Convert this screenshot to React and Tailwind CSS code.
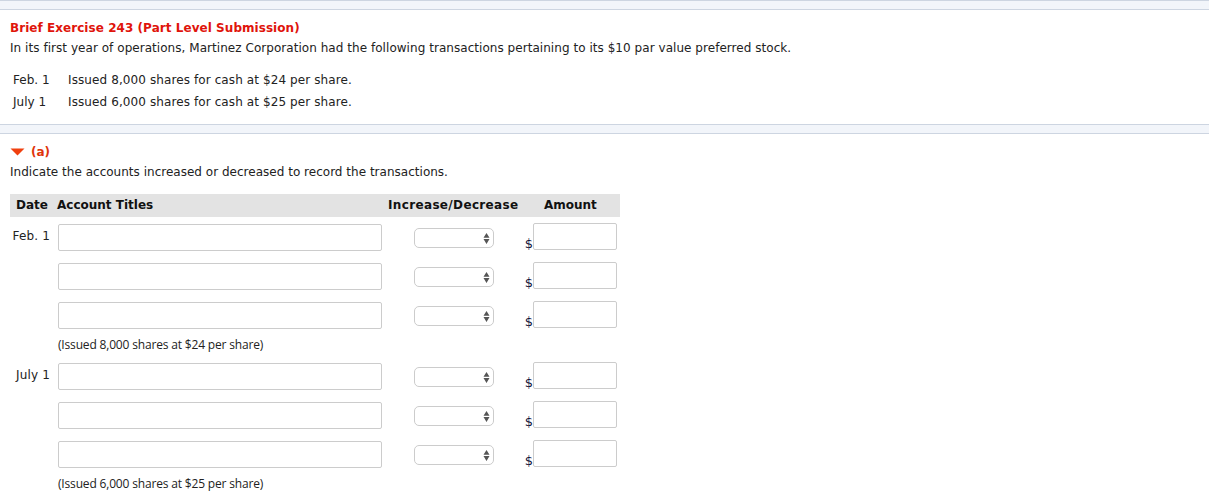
import React from "react";

const verdana = "font-['DejaVu_Sans',sans-serif]";

function Band() {
  return <div className="h-[10px] bg-[#f2f5fa] border-y border-[#cdd5e1]" />;
}

function UpDown() {
  return (
    <svg width="7" height="11" viewBox="0 0 7 11" className="text-[#555]">
      <path d="M3.5 0 L6.5 4.8 H0.5 Z M0.5 6 H6.5 L3.5 11 Z" fill="currentColor" />
    </svg>
  );
}

function Row({ date }) {
  return (
    <div className="flex h-[39px]">
      <div className="w-[48px] pt-[5px] pr-[8px] text-right text-[12px] leading-[16px] text-[#222] tracking-[0.15px] whitespace-nowrap">{date}</div>
      <div className="w-[324px] h-[27px] mt-px bg-white border border-[#ccc] rounded-[2px]" />
      <div className="w-[151px] flex items-start">
        <div className="ml-[32px] mt-[5px] w-[80px] h-[20px] flex items-center justify-end pr-[3px] border border-[#ccc] rounded-[5px] bg-white">
          <UpDown />
        </div>
        <div className="ml-[31px] mt-[13px] text-[13px] leading-[16px] text-[#14143c]">$</div>
      </div>
      <div className="w-[84px] h-[27px] bg-white border border-[#ccc] rounded-[2px]" />
    </div>
  );
}

function Note({ children }) {
  return (
    <div className="h-[22px] -mt-[3px] mb-[3px] pl-[48px] text-[12px] leading-[16px] text-[#222] font-['Open_Sans',sans-serif] tracking-[-0.17px]">
      {children}
    </div>
  );
}

export default function App() {
  return (
    <div className={`w-[1209px] h-[503px] overflow-hidden bg-white ${verdana} text-[#222]`}>
      <Band />
      <div className="h-[114px] px-[10px] pt-[10px] text-[12px]">
        <div className="text-[12px] leading-[16px] font-bold text-[#e0140b] tracking-[0.05px]">Brief Exercise 243 (Part Level Submission)</div>
        <div className="mt-1 leading-[16px] tracking-[0.045px]">
          In its first year of operations, Martinez Corporation had the following transactions pertaining to its $10 par value preferred stock.
        </div>
        <div className="mt-4 pl-[3px] flex leading-[16px]">
          <span className="w-[55px]">Feb. 1</span>
          <span className="tracking-[0.1px]">Issued 8,000 shares for cash at $24 per share.</span>
        </div>
        <div className="mt-[6px] pl-[3px] flex leading-[16px]">
          <span className="w-[55px]">July 1</span>
          <span className="tracking-[0.1px]">Issued 6,000 shares for cash at $25 per share.</span>
        </div>
      </div>
      <Band />
      <div className="px-[10px] pt-[10px] text-[12px]">
        <div className="flex items-center gap-[6px] h-4 leading-[16px]">
          <svg width="15" height="8" viewBox="0 0 15 8">
            <path d="M0.5 0.5 H14.5 L7.5 7.5 Z" fill="#f0400f" />
          </svg>
          <span className="font-bold text-[#e0340b]">(a)</span>
        </div>
        <div className="mt-1 leading-[16px] tracking-[0.015px]">Indicate the accounts increased or decreased to record the transactions.</div>
        <div className="mt-[14px] w-[610px] h-[23px] bg-[#e3e3e3] flex items-center pb-[2px] font-bold text-[#111] leading-[16px]">
          <span className="w-[47px] pl-[6px]">Date</span>
          <span className="w-[331px]">Account Titles</span>
          <span className="w-[156px] tracking-[0.35px]">Increase/Decrease</span>
          <span>Amount</span>
        </div>
        <div className="mt-[6px]">
          <Row date="Feb. 1" />
          <Row />
          <Row />
          <Note>(Issued 8,000 shares at $24 per share)</Note>
          <Row date="July 1" />
          <Row />
          <Row />
          <Note>(Issued 6,000 shares at $25 per share)</Note>
        </div>
      </div>
    </div>
  );
}
